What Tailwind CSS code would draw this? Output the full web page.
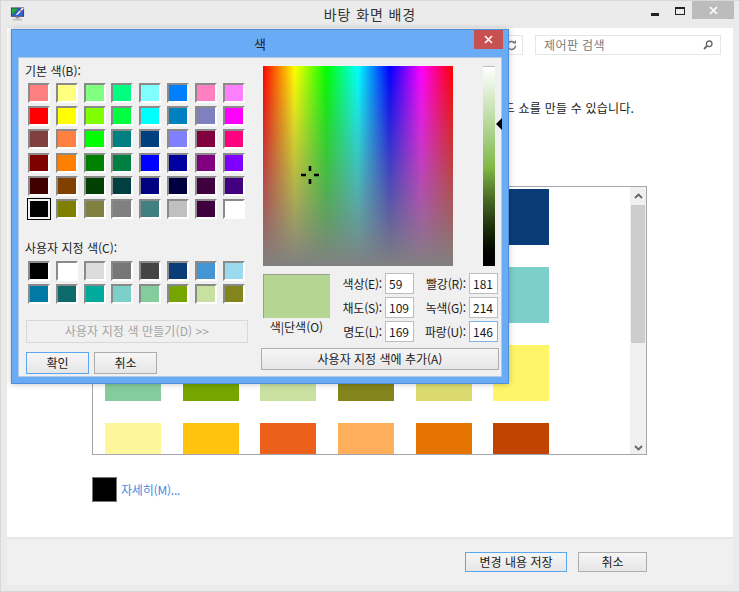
<!DOCTYPE html>
<html lang="ko">
<head>
    <meta charset="UTF-8">
    <title>바탕 화면 배경</title>
    <script src="https://cdn.jsdelivr.net/npm/@tailwindcss/browser@4"></script>
</head>
<body class="bg-[#ebebeb] font-['Noto_Sans_CJK_KR','Liberation_Sans',sans-serif] text-[12px] text-[#1a1a1a]">
<div class="relative w-[740px] h-[592px] overflow-hidden flex flex-col border border-[#d8d8d8]">

    <!-- Main window title bar -->
    <div class="relative h-[27px] shrink-0 flex items-center justify-center">
        <svg class="absolute left-[9px] top-[5px] w-[15px] h-[16px]" viewBox="0 0 16 16">
            <rect x="1" y="1" width="14" height="10" fill="#3a3f6e"/>
            <path d="M2 2h7L2 9z" fill="#1fae3c"/>
            <path d="M9 2h5v8H2z" fill="#2a62c8"/>
            <path d="M6 9l7-8 2 1-7 7z" fill="#e8e8f0"/>
            <path d="M11 3.5l1.5 1-1 1-1.5-1z" fill="#d04040"/>
            <rect x="6" y="11" width="4" height="2" fill="#9a9a9a"/>
            <rect x="3" y="13" width="10" height="2" fill="#c4c4c4"/>
        </svg>
        <span class="text-[14px] text-[#333] tracking-[0.9px]">바탕 화면 배경</span>
        <div class="absolute left-[650px] top-[12px] w-[8px] h-[3px] bg-[#222]"></div>
        <div class="absolute left-[674px] top-[6px] w-[10px] h-[8px] border border-t-2 border-[#222]"></div>
        <div class="absolute left-[691px] top-0 w-[42px] h-[18px] bg-[#bcbcbc] flex items-center justify-center">
            <svg class="w-[9px] h-[9px]" viewBox="0 0 9 9"><path d="M1 1l7 7M8 1l-7 7" stroke="#fff" stroke-width="1.6"/></svg>
        </div>
    </div>

    <!-- Main window content -->
    <div class="mx-[6px] h-[509px] shrink-0 bg-white flex flex-col">
        <div class="mt-[7px] h-[20px] flex justify-end gap-[12px] pr-[12px]">
            <div class="w-[40px] h-[20px] border border-[#e6e6e6] flex items-center justify-end pr-[5px]">
                <svg class="w-[11px] h-[11px]" viewBox="0 0 11 11" fill="none"><path d="M9.5 5.5a4 4 0 1 1-1.3-3" stroke="#777" stroke-width="1.4"/><path d="M6.5 3.5h3.5V0z" fill="#777"/></svg>
            </div>
            <div class="w-[186px] h-[20px] border border-[#e6e6e6] flex items-center justify-between pl-[8px] pr-[7px]">
                <span class="text-[#7a7a7a] tracking-[0.4px]">제어판 검색</span>
                <svg class="w-[10px] h-[10px]" viewBox="0 0 10 10" fill="none"><circle cx="6.2" cy="3.8" r="2.8" stroke="#666" stroke-width="1.3"/><path d="M4 6L1 9" stroke="#666" stroke-width="1.8"/></svg>
            </div>
        </div>
        <div class="mt-[44px] h-[18px] leading-[18px] w-[627px] flex justify-end whitespace-nowrap tracking-[0.2px]">슬라이드 쇼를 만들 수 있습니다.</div>

        <!-- Picture list -->
        <div class="mt-[69px] ml-[85px] w-[555px] h-[269px] border border-[#a5a5ad] flex overflow-hidden">
            <div class="flex-1 pl-[12px] pt-[2px] grid grid-cols-[repeat(6,56px)] auto-rows-[56px] gap-x-[21.7px] gap-y-[22px] content-start">
                <div class="bg-[#000000]"></div><div class="bg-[#ffffff]"></div><div class="bg-[#dcdcdc]"></div><div class="bg-[#777777]"></div><div class="bg-[#444444]"></div><div class="bg-[#0a3d78]"></div>
                <div class="bg-[#4495d4]"></div><div class="bg-[#9bdaee]"></div><div class="bg-[#0079a6]"></div><div class="bg-[#0c6a6a]"></div><div class="bg-[#00ab9e]"></div><div class="bg-[#7dcfc9]"></div>
                <div class="bg-[#85cc9d]"></div><div class="bg-[#77a500]"></div><div class="bg-[#c8e0a0]"></div><div class="bg-[#84841c]"></div><div class="bg-[#dada70]"></div><div class="bg-[#fff568]"></div>
                <div class="bg-[#fff59b]"></div><div class="bg-[#ffc30d]"></div><div class="bg-[#eb601b]"></div><div class="bg-[#ffae5c]"></div><div class="bg-[#e57500]"></div><div class="bg-[#c14400]"></div>
            </div>
            <div class="relative w-[16px] bg-[#f0f0f0] flex flex-col items-center">
                <svg class="mt-[6px] w-[9px] h-[6px]" viewBox="0 0 9 6" fill="none"><path d="M1 5l3.5-3.5L8 5" stroke="#666" stroke-width="1.8"/></svg>
                <div class="mt-[6px] w-[14px] h-[138px] bg-[#cdcdcd]"></div>
                <svg class="mt-auto mb-[3px] w-[9px] h-[6px]" viewBox="0 0 9 6" fill="none"><path d="M1 1l3.5 3.5L8 1" stroke="#666" stroke-width="1.8"/></svg>
            </div>
        </div>

        <div class="mt-[22px] ml-[85px] flex items-center gap-[4px]">
            <div class="w-[25px] h-[25px] bg-black border border-[#777]"></div>
            <span class="text-[#3d8ae6] tracking-[-0.2px]">자세히(M)...</span>
        </div>
    </div>

    <!-- Main window footer -->
    <div class="mx-[6px] mt-[1px] h-[47px] shrink-0 bg-[#f0f0f0] border-t border-[#e2e2e2] flex justify-end items-center gap-[11px] pr-[86px]">
        <button class="w-[102px] h-[20px] border border-[#5aa7f0] bg-gradient-to-b from-[#f6f6f6] to-[#e6e6e6]">변경 내용 저장</button>
        <button class="w-[69px] h-[20px] border border-[#adadad] bg-gradient-to-b from-[#f6f6f6] to-[#e6e6e6]">취소</button>
    </div>

    <!-- Color dialog floating on top -->
    <div class="absolute left-[10px] top-[28px] w-[498px] h-[355px] bg-[#6aabf5] border border-[#4f8ed8] flex flex-col px-[6px] pb-[6px] shadow-[0_0_6px_rgba(0,0,0,0.25)]">
        <div class="relative h-[27px] shrink-0 flex items-center justify-center text-[13px] text-[#222]">
            색
            <div class="absolute right-[-1px] top-0 w-[29px] h-[19px] bg-[#c75050] flex items-center justify-center">
                <svg class="w-[9px] h-[9px]" viewBox="0 0 9 9"><path d="M1 1l7 7M8 1l-7 7" stroke="#fff" stroke-width="1.6"/></svg>
            </div>
        </div>
        <div class="flex-1 bg-[#f0f0f0] flex border border-[#4f8ed8]/40">

            <!-- Left column: swatches -->
            <div class="w-[242px] shrink-0 pl-[6px] pt-[5px]">
                <div class="h-[16px] leading-[16px] text-[#222]">기본 색(B):</div>
                <div class="mt-[4px] ml-[3px] grid grid-cols-[repeat(8,27.8px)] auto-rows-[23.2px]">
                    <div class="w-[22px] h-[20px] border-2 border-t-[#8a8a8a] border-l-[#8a8a8a] border-r-white border-b-white bg-[#ff8080]"></div>
                    <div class="w-[22px] h-[20px] border-2 border-t-[#8a8a8a] border-l-[#8a8a8a] border-r-white border-b-white bg-[#ffff80]"></div>
                    <div class="w-[22px] h-[20px] border-2 border-t-[#8a8a8a] border-l-[#8a8a8a] border-r-white border-b-white bg-[#80ff80]"></div>
                    <div class="w-[22px] h-[20px] border-2 border-t-[#8a8a8a] border-l-[#8a8a8a] border-r-white border-b-white bg-[#00ff80]"></div>
                    <div class="w-[22px] h-[20px] border-2 border-t-[#8a8a8a] border-l-[#8a8a8a] border-r-white border-b-white bg-[#80ffff]"></div>
                    <div class="w-[22px] h-[20px] border-2 border-t-[#8a8a8a] border-l-[#8a8a8a] border-r-white border-b-white bg-[#0080ff]"></div>
                    <div class="w-[22px] h-[20px] border-2 border-t-[#8a8a8a] border-l-[#8a8a8a] border-r-white border-b-white bg-[#ff80c0]"></div>
                    <div class="w-[22px] h-[20px] border-2 border-t-[#8a8a8a] border-l-[#8a8a8a] border-r-white border-b-white bg-[#ff80ff]"></div>

                    <div class="w-[22px] h-[20px] border-2 border-t-[#8a8a8a] border-l-[#8a8a8a] border-r-white border-b-white bg-[#ff0000]"></div>
                    <div class="w-[22px] h-[20px] border-2 border-t-[#8a8a8a] border-l-[#8a8a8a] border-r-white border-b-white bg-[#ffff00]"></div>
                    <div class="w-[22px] h-[20px] border-2 border-t-[#8a8a8a] border-l-[#8a8a8a] border-r-white border-b-white bg-[#80ff00]"></div>
                    <div class="w-[22px] h-[20px] border-2 border-t-[#8a8a8a] border-l-[#8a8a8a] border-r-white border-b-white bg-[#00ff40]"></div>
                    <div class="w-[22px] h-[20px] border-2 border-t-[#8a8a8a] border-l-[#8a8a8a] border-r-white border-b-white bg-[#00ffff]"></div>
                    <div class="w-[22px] h-[20px] border-2 border-t-[#8a8a8a] border-l-[#8a8a8a] border-r-white border-b-white bg-[#0080c0]"></div>
                    <div class="w-[22px] h-[20px] border-2 border-t-[#8a8a8a] border-l-[#8a8a8a] border-r-white border-b-white bg-[#8080c0]"></div>
                    <div class="w-[22px] h-[20px] border-2 border-t-[#8a8a8a] border-l-[#8a8a8a] border-r-white border-b-white bg-[#ff00ff]"></div>

                    <div class="w-[22px] h-[20px] border-2 border-t-[#8a8a8a] border-l-[#8a8a8a] border-r-white border-b-white bg-[#804040]"></div>
                    <div class="w-[22px] h-[20px] border-2 border-t-[#8a8a8a] border-l-[#8a8a8a] border-r-white border-b-white bg-[#ff8040]"></div>
                    <div class="w-[22px] h-[20px] border-2 border-t-[#8a8a8a] border-l-[#8a8a8a] border-r-white border-b-white bg-[#00ff00]"></div>
                    <div class="w-[22px] h-[20px] border-2 border-t-[#8a8a8a] border-l-[#8a8a8a] border-r-white border-b-white bg-[#008080]"></div>
                    <div class="w-[22px] h-[20px] border-2 border-t-[#8a8a8a] border-l-[#8a8a8a] border-r-white border-b-white bg-[#004080]"></div>
                    <div class="w-[22px] h-[20px] border-2 border-t-[#8a8a8a] border-l-[#8a8a8a] border-r-white border-b-white bg-[#8080ff]"></div>
                    <div class="w-[22px] h-[20px] border-2 border-t-[#8a8a8a] border-l-[#8a8a8a] border-r-white border-b-white bg-[#800040]"></div>
                    <div class="w-[22px] h-[20px] border-2 border-t-[#8a8a8a] border-l-[#8a8a8a] border-r-white border-b-white bg-[#ff0080]"></div>

                    <div class="w-[22px] h-[20px] border-2 border-t-[#8a8a8a] border-l-[#8a8a8a] border-r-white border-b-white bg-[#800000]"></div>
                    <div class="w-[22px] h-[20px] border-2 border-t-[#8a8a8a] border-l-[#8a8a8a] border-r-white border-b-white bg-[#ff8000]"></div>
                    <div class="w-[22px] h-[20px] border-2 border-t-[#8a8a8a] border-l-[#8a8a8a] border-r-white border-b-white bg-[#008000]"></div>
                    <div class="w-[22px] h-[20px] border-2 border-t-[#8a8a8a] border-l-[#8a8a8a] border-r-white border-b-white bg-[#008040]"></div>
                    <div class="w-[22px] h-[20px] border-2 border-t-[#8a8a8a] border-l-[#8a8a8a] border-r-white border-b-white bg-[#0000ff]"></div>
                    <div class="w-[22px] h-[20px] border-2 border-t-[#8a8a8a] border-l-[#8a8a8a] border-r-white border-b-white bg-[#0000a0]"></div>
                    <div class="w-[22px] h-[20px] border-2 border-t-[#8a8a8a] border-l-[#8a8a8a] border-r-white border-b-white bg-[#800080]"></div>
                    <div class="w-[22px] h-[20px] border-2 border-t-[#8a8a8a] border-l-[#8a8a8a] border-r-white border-b-white bg-[#8000ff]"></div>

                    <div class="w-[22px] h-[20px] border-2 border-t-[#8a8a8a] border-l-[#8a8a8a] border-r-white border-b-white bg-[#400000]"></div>
                    <div class="w-[22px] h-[20px] border-2 border-t-[#8a8a8a] border-l-[#8a8a8a] border-r-white border-b-white bg-[#804000]"></div>
                    <div class="w-[22px] h-[20px] border-2 border-t-[#8a8a8a] border-l-[#8a8a8a] border-r-white border-b-white bg-[#004000]"></div>
                    <div class="w-[22px] h-[20px] border-2 border-t-[#8a8a8a] border-l-[#8a8a8a] border-r-white border-b-white bg-[#004040]"></div>
                    <div class="w-[22px] h-[20px] border-2 border-t-[#8a8a8a] border-l-[#8a8a8a] border-r-white border-b-white bg-[#000080]"></div>
                    <div class="w-[22px] h-[20px] border-2 border-t-[#8a8a8a] border-l-[#8a8a8a] border-r-white border-b-white bg-[#000040]"></div>
                    <div class="w-[22px] h-[20px] border-2 border-t-[#8a8a8a] border-l-[#8a8a8a] border-r-white border-b-white bg-[#400040]"></div>
                    <div class="w-[22px] h-[20px] border-2 border-t-[#8a8a8a] border-l-[#8a8a8a] border-r-white border-b-white bg-[#400080]"></div>

                    <div class="w-[22px] h-[20px] border-2 border-[#f0f0f0] bg-[#000000] outline outline-1 outline-black"></div>
                    <div class="w-[22px] h-[20px] border-2 border-t-[#8a8a8a] border-l-[#8a8a8a] border-r-white border-b-white bg-[#808000]"></div>
                    <div class="w-[22px] h-[20px] border-2 border-t-[#8a8a8a] border-l-[#8a8a8a] border-r-white border-b-white bg-[#808040]"></div>
                    <div class="w-[22px] h-[20px] border-2 border-t-[#8a8a8a] border-l-[#8a8a8a] border-r-white border-b-white bg-[#808080]"></div>
                    <div class="w-[22px] h-[20px] border-2 border-t-[#8a8a8a] border-l-[#8a8a8a] border-r-white border-b-white bg-[#408080]"></div>
                    <div class="w-[22px] h-[20px] border-2 border-t-[#8a8a8a] border-l-[#8a8a8a] border-r-white border-b-white bg-[#c0c0c0]"></div>
                    <div class="w-[22px] h-[20px] border-2 border-t-[#8a8a8a] border-l-[#8a8a8a] border-r-white border-b-white bg-[#400040]"></div>
                    <div class="w-[22px] h-[20px] border-2 border-t-[#8a8a8a] border-l-[#8a8a8a] border-r-white border-b-white bg-[#ffffff]"></div>
                </div>

                <div class="mt-[18px] h-[16px] leading-[16px] text-[#222]">사용자 지정 색(C):</div>
                <div class="mt-[5px] ml-[3px] grid grid-cols-[repeat(8,27.8px)] auto-rows-[23.2px]">
                    <div class="w-[22px] h-[20px] border-2 border-t-[#8a8a8a] border-l-[#8a8a8a] border-r-white border-b-white bg-[#000000]"></div>
                    <div class="w-[22px] h-[20px] border-2 border-t-[#8a8a8a] border-l-[#8a8a8a] border-r-white border-b-white bg-[#ffffff]"></div>
                    <div class="w-[22px] h-[20px] border-2 border-t-[#8a8a8a] border-l-[#8a8a8a] border-r-white border-b-white bg-[#dcdcdc]"></div>
                    <div class="w-[22px] h-[20px] border-2 border-t-[#8a8a8a] border-l-[#8a8a8a] border-r-white border-b-white bg-[#777777]"></div>
                    <div class="w-[22px] h-[20px] border-2 border-t-[#8a8a8a] border-l-[#8a8a8a] border-r-white border-b-white bg-[#444444]"></div>
                    <div class="w-[22px] h-[20px] border-2 border-t-[#8a8a8a] border-l-[#8a8a8a] border-r-white border-b-white bg-[#0a3d78]"></div>
                    <div class="w-[22px] h-[20px] border-2 border-t-[#8a8a8a] border-l-[#8a8a8a] border-r-white border-b-white bg-[#4495d4]"></div>
                    <div class="w-[22px] h-[20px] border-2 border-t-[#8a8a8a] border-l-[#8a8a8a] border-r-white border-b-white bg-[#9bdaee]"></div>

                    <div class="w-[22px] h-[20px] border-2 border-t-[#8a8a8a] border-l-[#8a8a8a] border-r-white border-b-white bg-[#0079a6]"></div>
                    <div class="w-[22px] h-[20px] border-2 border-t-[#8a8a8a] border-l-[#8a8a8a] border-r-white border-b-white bg-[#0c6a6a]"></div>
                    <div class="w-[22px] h-[20px] border-2 border-t-[#8a8a8a] border-l-[#8a8a8a] border-r-white border-b-white bg-[#00ab9e]"></div>
                    <div class="w-[22px] h-[20px] border-2 border-t-[#8a8a8a] border-l-[#8a8a8a] border-r-white border-b-white bg-[#7dcfc9]"></div>
                    <div class="w-[22px] h-[20px] border-2 border-t-[#8a8a8a] border-l-[#8a8a8a] border-r-white border-b-white bg-[#85cc9d]"></div>
                    <div class="w-[22px] h-[20px] border-2 border-t-[#8a8a8a] border-l-[#8a8a8a] border-r-white border-b-white bg-[#77a500]"></div>
                    <div class="w-[22px] h-[20px] border-2 border-t-[#8a8a8a] border-l-[#8a8a8a] border-r-white border-b-white bg-[#c8e0a0]"></div>
                    <div class="w-[22px] h-[20px] border-2 border-t-[#8a8a8a] border-l-[#8a8a8a] border-r-white border-b-white bg-[#84841c]"></div>
                </div>

                <div class="mt-[12px] ml-[1px] w-[222px] h-[23px] border border-[#d8d8d8] flex items-center justify-center text-[#a3a3a3] tracking-[0.1px]">사용자 지정 색 만들기(D) &gt;&gt;</div>
                <div class="mt-[9px] ml-[1px] flex gap-[5px]">
                    <button class="w-[63px] h-[22px] border border-[#5aa7f0] bg-gradient-to-b from-[#f6f6f6] to-[#e6e6e6]">확인</button>
                    <button class="w-[63px] h-[22px] border border-[#adadad] bg-gradient-to-b from-[#f6f6f6] to-[#e6e6e6]">취소</button>
                </div>
            </div>

            <!-- Right column: spectrum and values -->
            <div class="flex-1 pl-[2px] pt-[8px]">
                <div class="relative flex">
                    <div class="relative w-[190px] h-[200px] bg-[linear-gradient(to_right,#f00,#ff0,#0f0,#0ff,#00f,#f0f,#f00)]">
                        <div class="absolute inset-0 bg-gradient-to-b from-[#80808000] to-[#808080]"></div>
                        <svg class="absolute left-[38px] top-[100px] w-[18px] h-[18px]" viewBox="0 0 18 18"><path d="M7.7 0h2.6v5H7.7zM7.7 13h2.6v5H7.7zM0 7.7h5v2.6H0zM13 7.7h5v2.6h-5z" fill="#000"/></svg>
                    </div>
                    <div class="ml-[29.5px] w-[12px] h-[200px] border-t border-[#bdbdbd] bg-gradient-to-b from-[#ffffff] via-[#82b946] to-[#000000]"></div>
                    <svg class="absolute left-[233px] top-[52px] w-[6px] h-[12px]" viewBox="0 0 6 12"><path d="M6 0v12L0 6z" fill="#000"/></svg>
                </div>

                <div class="mt-[7px] flex">
                    <div class="w-[67px] shrink-0">
                        <div class="mt-[1px] h-[44px] bg-[#b5d692] border-t border-l border-[#9a9f94]"></div>
                        <div class="mt-[1px] text-center leading-[16px] text-[#222]">색|단색(O)</div>
                    </div>
                    <div class="grid grid-cols-[52px_29px_49px_29px] auto-rows-[21px] gap-x-[3px] gap-y-[3px] items-center text-right tracking-[-0.2px]">
                        <span>색상(E):</span><div class="h-[21px] bg-white border border-[#bdbdbd] text-left pl-[3px] leading-[19px] tracking-normal">59</div>
                        <span>빨강(R):</span><div class="h-[21px] bg-white border border-[#bdbdbd] text-left pl-[3px] leading-[19px] tracking-normal">181</div>
                        <span>채도(S):</span><div class="h-[21px] bg-white border border-[#bdbdbd] text-left pl-[3px] leading-[19px] tracking-normal">109</div>
                        <span>녹색(G):</span><div class="h-[21px] bg-white border border-[#bdbdbd] text-left pl-[3px] leading-[19px] tracking-normal">214</div>
                        <span>명도(L):</span><div class="h-[21px] bg-white border border-[#bdbdbd] text-left pl-[3px] leading-[19px] tracking-normal">169</div>
                        <span>파랑(U):</span><div class="h-[21px] bg-white border border-[#7eb4ea] text-left pl-[3px] leading-[19px] tracking-normal">146</div>
                    </div>
                </div>

                <button class="mt-[6px] ml-[-2px] w-[238px] h-[22px] border border-[#adadad] bg-gradient-to-b from-[#f6f6f6] to-[#e6e6e6]">사용자 지정 색에 추가(A)</button>
            </div>
        </div>
    </div>
</div>
</body>
</html>
